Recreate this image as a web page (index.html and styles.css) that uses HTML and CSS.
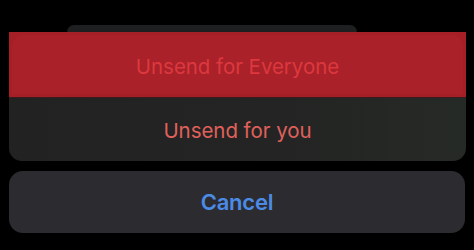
FILE: index.html
```html
<!DOCTYPE html>
<html>
<head>
<meta charset="utf-8">
<link rel="stylesheet" href="styles.css">
</head>
<body>
<div class="screen">
  <div class="behind"></div>
  <div class="group">
    <div class="row red"><div class="hl">Unsend for Everyone</div></div>
    <div class="divider"></div>
    <div class="row you">Unsend for you</div>
  </div>
  <div class="cancel">Cancel</div>
</div>
</body>
</html>
```
FILE: styles.css
```css
html, body {
  margin: 0;
  padding: 0;
  background: #000;
}
.screen {
  width: 474px;
  height: 250px;
  padding-top: 25px;
  box-sizing: border-box;
  font-family: Inter, "Noto Sans", sans-serif;
}
.behind {
  width: 290px;
  height: 7px;
  margin-left: 67px;
  background: #1d1f20;
  border-radius: 11px 11px 0 0;
}
.group {
  width: 457px;
  margin-left: 9px;
  border-radius: 0 0 13px 13px;
  overflow: hidden;
  background: linear-gradient(90deg, #222222 0%, #232423 60%, #262a26 100%);
}
.row {
  display: flex;
  align-items: center;
  justify-content: center;
  font-size: 20.5px;
  letter-spacing: -0.05px;
}
.red {
  height: 65px;
  background: #a51f27;
  padding: 3px;
  box-sizing: border-box;
}
.hl {
  flex: 1;
  align-self: stretch;
  display: flex;
  align-items: center;
  justify-content: center;
  background: #aa2129;
  border-radius: 11px 11px 0 0;
  color: #dc383e;
  padding-top: 4px;
}
.divider {
  height: 1px;
  background: #3b1c1e;
}
.you {
  height: 63px;
  color: #e0615b;
  padding-top: 2px;
  box-sizing: border-box;
}
.cancel {
  width: 456px;
  height: 62px;
  margin: 10px 0 0 9px;
  background: #2c2c30;
  border-radius: 14px;
  display: flex;
  align-items: center;
  justify-content: center;
  color: #4b8be6;
  font-size: 22px;
  font-weight: 600;
  letter-spacing: -0.2px;
}
```
